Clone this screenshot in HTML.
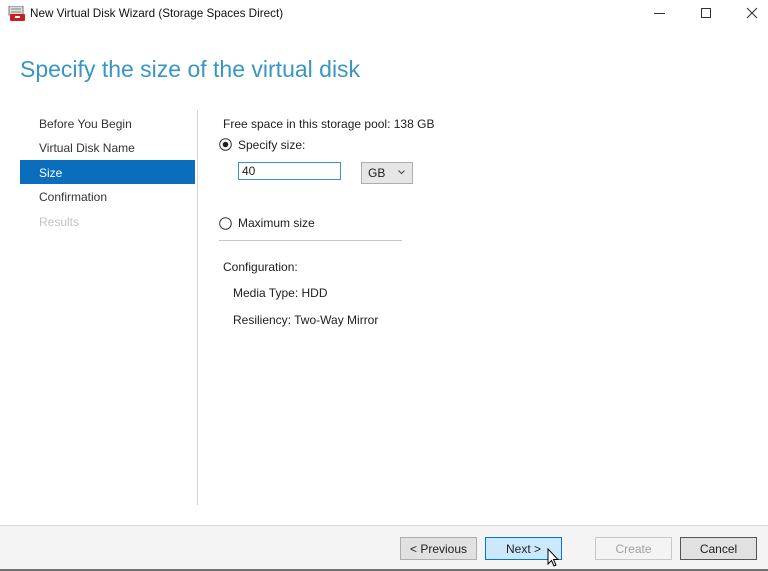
<!DOCTYPE html>
<html><head><meta charset="utf-8"><style>
*{margin:0;padding:0;box-sizing:border-box}
body{width:768px;height:571px;background:#fff;font-family:"Liberation Sans",sans-serif;font-size:12px;color:#1e1e1e;position:relative;overflow:hidden}
.a{position:absolute;white-space:nowrap}
.nav{position:absolute;left:39px;font-size:12px;color:#333}
.btn{position:absolute;top:537px;height:23px;border:1px solid #adadad;background:#e1e1e1;text-align:center;line-height:23px;font-size:12px;color:#222}
</style></head><body>
<svg class="a" style="left:8px;top:6px" width="18" height="16" viewBox="0 0 18 16">
<rect x="1" y="0" width="14" height="9" fill="#ddd" stroke="#777"/>
<line x1="3" y1="3" x2="13" y2="3" stroke="#888"/><line x1="3" y1="6" x2="13" y2="6" stroke="#888"/>
<rect x="2" y="8" width="15" height="7" rx="1" fill="#c8201e"/>
<rect x="7" y="10" width="5" height="2" fill="#fff"/>
</svg>
<div class="a" style="left:30px;top:7px;font-size:11.7px;color:#111">New Virtual Disk Wizard (Storage Spaces Direct)</div>
<div class="a" style="left:654px;top:13px;width:11px;height:1px;background:#333"></div>
<div class="a" style="left:701px;top:8px;width:10px;height:10px;border:1px solid #333"></div>
<svg class="a" style="left:746px;top:7px" width="12" height="12"><path d="M1 1L11 11M11 1L1 11" stroke="#333" stroke-width="1.1"/></svg>
<div class="a" style="left:20px;top:56px;font-size:23px;color:#3996c2">Specify the size of the virtual disk</div>

<div class="nav" style="top:117px">Before You Begin</div>
<div class="nav" style="top:141px">Virtual Disk Name</div>
<div class="a" style="left:20px;top:160px;width:175px;height:24px;background:#0a6ebd"></div>
<div class="nav" style="top:166px;color:#fff">Size</div>
<div class="nav" style="top:190px">Confirmation</div>
<div class="nav" style="top:215px;color:#c4c4c4">Results</div>
<div class="a" style="left:197px;top:110px;width:1px;height:395px;background:#d4d4d4"></div>

<div class="a" style="left:223px;top:117px">Free space in this storage pool: 138 GB</div>
<svg class="a" style="left:219px;top:138px" width="13" height="13"><circle cx="6.5" cy="6.5" r="5.8" fill="#fff" stroke="#333"/><circle cx="6.5" cy="6.5" r="2.8" fill="#222"/></svg>
<div class="a" style="left:238px;top:138px">Specify size:</div>
<div class="a" style="left:238px;top:162px;width:103px;height:18px;border:1px solid #3c8fd6;padding:1px 3px;line-height:14px">40</div>
<div class="a" style="left:361px;top:162px;width:52px;height:22px;border:1px solid #adadad;background:#e6e6e6;padding-left:6px;line-height:20px">GB</div>
<svg class="a" style="left:398px;top:170px" width="7" height="5"><path d="M0.5 0.5L3.5 3.5L6.5 0.5" stroke="#444" fill="none"/></svg>
<svg class="a" style="left:219px;top:217px" width="13" height="13"><circle cx="6.5" cy="6.5" r="5.8" fill="#fff" stroke="#333"/></svg>
<div class="a" style="left:238px;top:216px">Maximum size</div>
<div class="a" style="left:219px;top:240px;width:183px;height:1px;background:#c8c8c8"></div>

<div class="a" style="left:223px;top:260px">Configuration:</div>
<div class="a" style="left:233px;top:286px">Media Type: HDD</div>
<div class="a" style="left:233px;top:313px">Resiliency: Two-Way Mirror</div>

<div class="a" style="left:0;top:525px;width:768px;height:45px;background:#f4f4f4;border-top:1px solid #dadada"></div>
<div class="a" style="left:0;top:569px;width:768px;height:2px;background:#707070"></div>
<div class="btn" style="left:400px;width:77px">&lt; Previous</div>
<div class="btn" style="left:485px;width:77px;background:#cce8ff;border-color:#0078d7">Next &gt;</div>
<div class="btn" style="left:595px;width:77px;background:#f4f4f4;border-color:#c8c8c8;color:#a0a0a0">Create</div>
<div class="btn" style="left:680px;width:77px;border-color:#555">Cancel</div>
<svg class="a" style="left:547px;top:548px" width="12" height="20"><path d="M1 1L1 16L4.5 12.5L7 18L9 17L6.5 11.5L11 11.5Z" fill="#fff" stroke="#000" stroke-width="1"/></svg>
</body></html>
